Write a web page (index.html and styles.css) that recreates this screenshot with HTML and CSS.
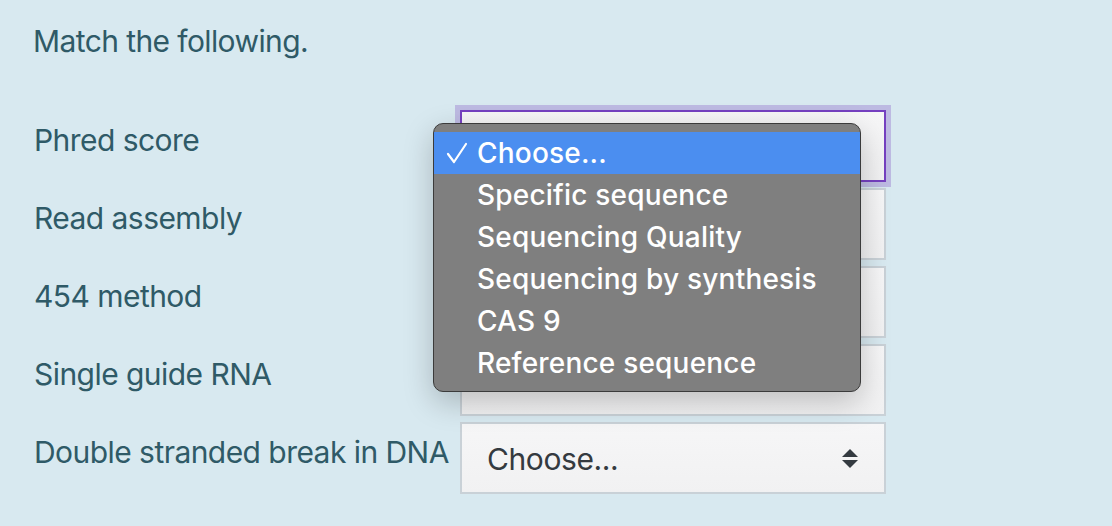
FILE: index.html
```html
<!DOCTYPE html>
<html lang="en">
<head>
  <meta charset="UTF-8">
  <meta name="viewport" content="width=device-width, initial-scale=1.0">
  <title>Match the following</title>
  <link rel="stylesheet" href="styles.css">
</head>
<body>
  <div class="question">
    <p class="qtext">Match the following.</p>

    <div class="answers">
      <div class="row">
        <label class="stem">Phred score</label>
        <div class="select focused">
          <span class="value"></span>
        </div>
      </div>
      <div class="row">
        <label class="stem">Read assembly</label>
        <div class="select"><span class="value"></span></div>
      </div>
      <div class="row">
        <label class="stem">454 method</label>
        <div class="select"><span class="value"></span></div>
      </div>
      <div class="row">
        <label class="stem">Single guide RNA</label>
        <div class="select"><span class="value"></span></div>
      </div>
      <div class="row">
        <label class="stem">Double stranded break in DNA</label>
        <div class="select">
          <span class="value">Choose...</span>
          <svg class="arrows" width="16" height="20" viewBox="0 0 16 20">
            <polygon points="8,0 16,8 0,8" />
            <polygon points="0,11 16,11 8,19" />
          </svg>
        </div>
      </div>
    </div>

    <!-- open native menu of the first select -->
    <ul class="menu">
      <li class="active">
        <svg class="check" width="22" height="22" viewBox="0 0 22 22">
          <polyline points="2,12 8,20 20,2" />
        </svg>Choose...
      </li>
      <li>Specific sequence</li>
      <li>Sequencing Quality</li>
      <li>Sequencing by synthesis</li>
      <li>CAS 9</li>
      <li>Reference sequence</li>
    </ul>
  </div>
</body>
</html>
```

FILE: styles.css
```css
body { margin: 0; background: #d8e9f0; font-family: Inter, "Open Sans", sans-serif; color: #2f5a67; }
.question { position: relative; padding: 19px 0 0 33px; height: 507px; }
.qtext { margin: 0; font-size: 30px; line-height: 45px; letter-spacing: -0.6px; }
.answers { margin-top: 46px; display: flex; flex-direction: column; gap: 6px; }
.row { display: flex; }
.stem { width: 426px; padding: 8px 0 0 1px; font-size: 30px; line-height: 45px; letter-spacing: -0.55px; white-space: nowrap; }
.select { width: 426px; height: 72px; box-sizing: border-box; border: 2px solid #c9d1d7; background: linear-gradient(#f6f6f7, #f1f1f2); display: flex; align-items: center; justify-content: space-between; padding: 0 26px 0 25px; color: #343a40; font-size: 30px; letter-spacing: -0.4px; }
.select.focused { border-color: #7540c0; box-shadow: 0 0 0 5px rgba(117, 64, 192, 0.28); }
.value { padding-top: 2px; }
.arrows { fill: #343a40; margin-top: 2px; }
.menu { position: absolute; left: 433px; top: 123px; width: 428px; height: 269px; box-sizing: border-box; margin: 0; padding: 8px 0 0; list-style: none; background: #7f7f7f; border: 1px solid #3b3b3b; border-radius: 10px; box-shadow: 0 10px 30px rgba(0, 0, 0, 0.22); overflow: hidden; }
.menu li { height: 42px; line-height: 42px; padding-left: 43px; color: #fff; font-size: 28px; font-weight: 500; letter-spacing: 0.2px; position: relative; }
.menu li.active { background: #4b8ef0; }
.check { position: absolute; left: 12px; top: 10px; fill: none; stroke: #fff; stroke-width: 2.2; stroke-linecap: round; stroke-linejoin: round; }
```
